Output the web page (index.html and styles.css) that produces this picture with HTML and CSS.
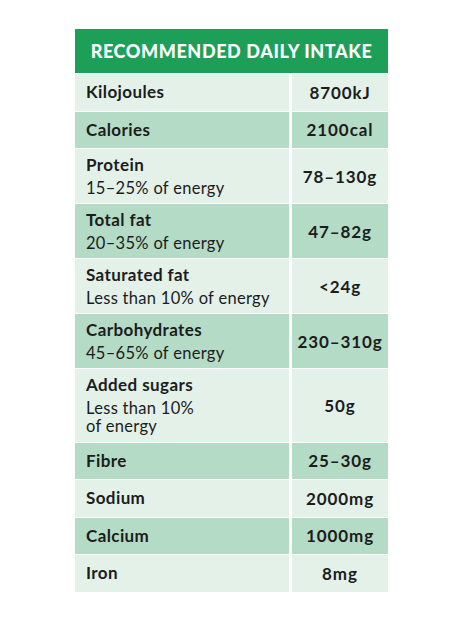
FILE: index.html
```html
<!DOCTYPE html>
<html lang="en">
<head>
    <meta charset="UTF-8">
    <meta name="viewport" content="width=device-width, initial-scale=1.0">
    <title>Recommended Daily Intake</title>
    <link rel="stylesheet" href="styles.css">
</head>
<body>
    <div class="intake">
        <h1 class="intake-title">RECOMMENDED DAILY INTAKE</h1>

        <div class="intake-rows">
            <div class="row">
                <div class="cell name"><b>Kilojoules</b></div>
                <div class="cell amount">8700kJ</div>
            </div>
            <div class="row alt">
                <div class="cell name"><b>Calories</b></div>
                <div class="cell amount">2100cal</div>
            </div>
            <div class="row">
                <div class="cell name"><b>Protein</b><span>15–25% of energy</span></div>
                <div class="cell amount">78–130g</div>
            </div>
            <div class="row alt">
                <div class="cell name"><b>Total fat</b><span>20–35% of energy</span></div>
                <div class="cell amount">47–82g</div>
            </div>
            <div class="row">
                <div class="cell name"><b>Saturated fat</b><span>Less than 10% of energy</span></div>
                <div class="cell amount">&lt;24g</div>
            </div>
            <div class="row alt">
                <div class="cell name"><b>Carbohydrates</b><span>45–65% of energy</span></div>
                <div class="cell amount">230–310g</div>
            </div>
            <div class="row">
                <div class="cell name"><b>Added sugars</b><span>Less than 10%<br>of energy</span></div>
                <div class="cell amount">50g</div>
            </div>
            <div class="row alt">
                <div class="cell name"><b>Fibre</b></div>
                <div class="cell amount">25–30g</div>
            </div>
            <div class="row">
                <div class="cell name"><b>Sodium</b></div>
                <div class="cell amount">2000mg</div>
            </div>
            <div class="row alt">
                <div class="cell name"><b>Calcium</b></div>
                <div class="cell amount">1000mg</div>
            </div>
            <div class="row">
                <div class="cell name"><b>Iron</b></div>
                <div class="cell amount">8mg</div>
            </div>
        </div>
    </div>
</body>
</html>
```

FILE: styles.css
```css
body {
    margin: 0;
    background-color: #ffffff;
    font-family: Lato, "Open Sans", sans-serif;
    color: #1c1c1c;
}

.intake {
    width: 313px;
    margin: 29px 0 0 75px;
}

.intake-title {
    margin: 0 0 1px;
    height: 44px;
    display: flex;
    align-items: center;
    justify-content: center;
    background-color: #1d9f58;
    color: #ffffff;
    font-size: 18px;
    font-weight: 900;
    letter-spacing: 0.6px;
}

.intake-rows {
    display: flex;
    flex-direction: column;
    gap: 1px;
}

.row {
    display: grid;
    grid-template-columns: 214px 96px;
    column-gap: 3px;
}

.cell {
    background-color: #e3f1e9;
}

.row.alt .cell {
    background-color: #b3dbc6;
}

.name {
    min-height: 36.5px;
    padding: 5.5px 8px 6px 11px;
    box-sizing: border-box;
    display: flex;
    flex-direction: column;
    justify-content: center;
}

.name b {
    font-size: 17px;
    font-weight: 700;
    line-height: 20px;
    letter-spacing: 0.4px;
}

.name span {
    margin-top: 4px;
    font-size: 16.5px;
    line-height: 18.5px;
    letter-spacing: 0.3px;
}

.amount {
    display: flex;
    align-items: center;
    justify-content: center;
    font-size: 17px;
    font-weight: 700;
    letter-spacing: 0.9px;
}
```
